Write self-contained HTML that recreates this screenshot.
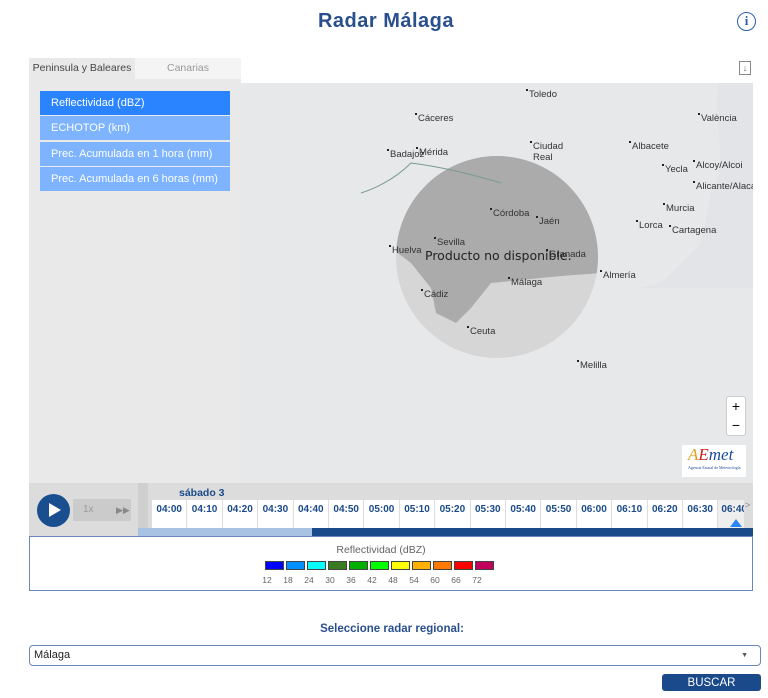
<!DOCTYPE html>
<html><head><meta charset="utf-8"><style>
*{margin:0;padding:0;box-sizing:border-box}
body{width:768px;height:698px;background:#fff;font-family:"Liberation Sans",sans-serif;position:relative;overflow:hidden}
.a{position:absolute}
.title{left:0;width:772px;top:10px;text-align:center;font-size:20px;color:#2a4f8f;letter-spacing:.5px;font-weight:bold}
.tab{top:58px;height:21px;font-size:10.5px;text-align:center;line-height:21px}
.btn{left:40px;width:190px;height:24px;color:#fff;font-size:11px;line-height:24px;padding-left:11px}
.city{font-size:9.5px;color:#333;position:absolute}
.city:before{content:"";position:absolute;left:-3px;top:0;width:1.5px;height:1.5px;background:#222}
.cell{top:500px;height:28px;width:35.4px;background:#fff;border-right:1px solid #ddd;font-size:10px;font-weight:bold;color:#1a4a8a;text-align:center;line-height:20px}
.sw{top:561px;width:19px;height:9px;border:1px solid #444}
.lb{top:575px;font-size:8.5px;color:#666;width:20px;text-align:center}
</style></head><body>
<div class="a title">Radar Málaga</div>
<div class="a" style="left:737px;top:12px;width:19px;height:19px;border:1.5px solid #2a5fa8;border-radius:50%;color:#2a5fa8;font:bold 13px 'Liberation Serif',serif;text-align:center;line-height:16px">i</div>
<div class="a" style="left:739px;top:61px;width:12px;height:14px;border:1px solid #888;font-size:9px;text-align:center;line-height:12px;color:#666">↓</div>
<div class="a tab" style="left:29px;width:106px;background:#e9e9e9;color:#444">Peninsula y Baleares</div>
<div class="a tab" style="left:135px;width:106px;background:#f4f4f4;color:#999">Canarias</div>
<div class="a" style="left:29px;top:79px;width:212px;height:404px;background:#e9e9e9"></div>
<div class="a btn" style="top:91px;background:#2a84ff">Reflectividad (dBZ)</div>
<div class="a btn" style="top:116px;background:#7db3ff">ECHOTOP (km)</div>
<div class="a btn" style="top:142px;background:#7db3ff">Prec. Acumulada en 1 hora (mm)</div>
<div class="a btn" style="top:167px;background:#7db3ff">Prec. Acumulada en 6 horas (mm)</div>
<div class="a" style="left:241px;top:83px;width:512px;height:400px;background:#e7e8ea;overflow:hidden">
<svg width="512" height="400" style="position:absolute;left:0;top:0">
<path d="M478 0 C470 40 490 80 470 110 L460 160 L420 200 L400 205 L512 205 L512 0Z" fill="#e3e4e7"/>
<circle cx="256" cy="174" r="101" fill="#d6d6d6"/>
<clipPath id="c"><circle cx="256" cy="174" r="101"/></clipPath>
<path clip-path="url(#c)" d="M140 60 L280 70 L360 90 L360 190 L320 193 L250 200 L230 225 L215 240 L195 230 L190 205 L170 180 L150 165 Z" fill="#ababab"/>
<path d="M120 110 Q150 100 170 80 Q210 85 260 100" stroke="#7a9a8a" fill="none" stroke-width="1"/>
</svg>
<span class="city" style="left:288px;top:6px">Toledo</span>
<span class="city" style="left:177px;top:30px">Cáceres</span>
<span class="city" style="left:460px;top:30px">València</span>
<span class="city" style="left:149px;top:66px">Badajoz</span>
<span class="city" style="left:178px;top:64px">Mérida</span>
<span class="city" style="left:292px;top:58px">Ciudad<br>Real</span>
<span class="city" style="left:391px;top:58px">Albacete</span>
<span class="city" style="left:424px;top:81px">Yecla</span>
<span class="city" style="left:455px;top:77px">Alcoy/Alcoi</span>
<span class="city" style="left:455px;top:98px">Alicante/Alacant</span>
<span class="city" style="left:425px;top:120px">Murcia</span>
<span class="city" style="left:252px;top:125px">Córdoba</span>
<span class="city" style="left:298px;top:133px">Jaén</span>
<span class="city" style="left:398px;top:137px">Lorca</span>
<span class="city" style="left:431px;top:142px">Cartagena</span>
<span class="city" style="left:196px;top:154px">Sevilla</span>
<span class="city" style="left:151px;top:162px">Huelva</span>
<span class="city" style="left:308px;top:166px">Granada</span>
<span class="city" style="left:362px;top:187px">Almería</span>
<span class="city" style="left:270px;top:194px">Málaga</span>
<span class="city" style="left:183px;top:206px">Cádiz</span>
<span class="city" style="left:229px;top:243px">Ceuta</span>
<span class="city" style="left:339px;top:277px">Melilla</span>
<div class="a" style="left:184px;top:165px;font-size:12.5px;color:#222;font-family:'DejaVu Sans',sans-serif">Producto no disponible.</div>
<div class="a" style="left:485px;top:313px;width:20px;height:40px;background:#fff;border-radius:3px;border:1px solid #ccc;font-size:14px;text-align:center;line-height:19px">+<br>−</div>
<div class="a" style="left:441px;top:362px;width:64px;height:32px;background:#fff;font:italic 17px 'Liberation Serif',serif;color:#1a4a9a;padding-left:6px"><span style="color:#e0a020">A</span><span style="color:#d02020">E</span>met<div style="font-size:4px;color:#1a4a9a;font-style:normal">Agencia Estatal de Meteorología</div></div>
</div>
<div class="a" style="left:29px;top:483px;width:724px;height:53px;background:#dcdcdc"></div>
<div class="a" style="left:37px;top:494px;width:33px;height:33px;border-radius:50%;background:#1a4f8f"></div>
<div class="a" style="left:49px;top:503px;width:0;height:0;border-left:12px solid #fff;border-top:7px solid transparent;border-bottom:7px solid transparent"></div>
<div class="a" style="left:73px;top:499px;width:58px;height:22px;background:#cbcbcb;font-size:10px;color:#999;line-height:22px;padding-left:10px">1x<span style="position:absolute;left:43px;color:#888;font-size:9px">▶▶</span></div>
<div class="a" style="left:138px;top:483px;width:10px;height:45px;background:#cfcfcf"></div>
<div class="a" style="left:179px;top:487px;font-size:10.5px;font-weight:bold;color:#1a4a8a">sábado 3</div>
<div class="a" style="left:152px;top:500px;width:592px;height:28px;background:#fff"></div>
<div class="a cell" style="left:152.0px">04:00</div><div class="a cell" style="left:187.4px">04:10</div><div class="a cell" style="left:222.8px">04:20</div><div class="a cell" style="left:258.2px">04:30</div><div class="a cell" style="left:293.6px">04:40</div><div class="a cell" style="left:329.0px">04:50</div><div class="a cell" style="left:364.4px">05:00</div><div class="a cell" style="left:399.8px">05:10</div><div class="a cell" style="left:435.2px">05:20</div><div class="a cell" style="left:470.6px">05:30</div><div class="a cell" style="left:506.0px">05:40</div><div class="a cell" style="left:541.4px">05:50</div><div class="a cell" style="left:576.8px">06:00</div><div class="a cell" style="left:612.2px">06:10</div><div class="a cell" style="left:647.6px">06:20</div><div class="a cell" style="left:683.0px">06:30</div><div class="a cell" style="left:718.4px;width:27px;background:#eee;overflow:hidden;text-align:left;padding-left:3px">06:40</div>
<div class="a" style="left:730px;top:519px;border-left:6px solid transparent;border-right:6px solid transparent;border-bottom:8px solid #2a84ff"></div>
<div class="a" style="left:745px;top:500px;font-size:9px;color:#888">&gt;</div>
<div class="a" style="left:138px;top:528px;width:174px;height:8px;background:#a8c2e4"></div>
<div class="a" style="left:312px;top:528px;width:441px;height:8px;background:#1a4a8a"></div>
<div class="a" style="left:29px;top:536px;width:724px;height:55px;border:1px solid #6b86b8;background:#fff"></div>
<div class="a" style="left:0;width:762px;top:544px;text-align:center;font-size:10.5px;color:#666">Reflectividad (dBZ)</div>
<div class="a sw" style="left:265px;background:#0000ff"></div><div class="a sw" style="left:286px;background:#0090ff"></div><div class="a sw" style="left:307px;background:#00ffff"></div><div class="a sw" style="left:328px;background:#3a7a20"></div><div class="a sw" style="left:349px;background:#00b000"></div><div class="a sw" style="left:370px;background:#00ff00"></div><div class="a sw" style="left:391px;background:#ffff00"></div><div class="a sw" style="left:412px;background:#ffb000"></div><div class="a sw" style="left:433px;background:#ff7a00"></div><div class="a sw" style="left:454px;background:#ff0000"></div><div class="a sw" style="left:475px;background:#c0005a"></div>
<div class="a lb" style="left:257px">12</div><div class="a lb" style="left:278px">18</div><div class="a lb" style="left:299px">24</div><div class="a lb" style="left:320px">30</div><div class="a lb" style="left:341px">36</div><div class="a lb" style="left:362px">42</div><div class="a lb" style="left:383px">48</div><div class="a lb" style="left:404px">54</div><div class="a lb" style="left:425px">60</div><div class="a lb" style="left:446px">66</div><div class="a lb" style="left:467px">72</div>
<div class="a" style="left:0;width:784px;top:623px;text-align:center;font-size:11.5px;font-weight:bold;color:#2a4f8f">Seleccione radar regional:</div>
<div class="a" style="left:29px;top:645px;width:732px;height:21px;border:1px solid #6b86b8;border-radius:4px;font-size:11px;line-height:19px;padding-left:4px;color:#222">Málaga<span style="position:absolute;right:12px;font-size:7px;color:#555">▼</span></div>
<div class="a" style="left:662px;top:674px;width:99px;height:17px;background:#1a4a8a;border-radius:3px;color:#fff;font-size:11.5px;text-align:center;line-height:19px">BUSCAR</div>
</body></html>
